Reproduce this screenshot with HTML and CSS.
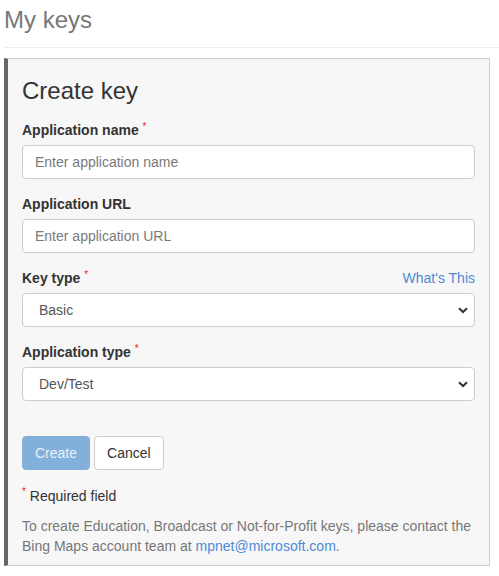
FILE: index.html
```html
<!DOCTYPE html>
<html>
<head>
<meta charset="utf-8">
<link rel="stylesheet" href="styles.css">
</head>
<body>
<div class="page">
  <h1 class="page-title">My keys</h1>
  <hr class="divider">
  <div class="panel">
    <h3 class="panel-title">Create key</h3>
    <div class="form-group">
      <label class="label">Application name <sup class="req">*</sup></label>
      <input class="control" type="text" placeholder="Enter application name">
    </div>
    <div class="form-group">
      <label class="label">Application URL</label>
      <input class="control" type="text" placeholder="Enter application URL">
    </div>
    <div class="form-group">
      <div class="label-row">
        <label class="label">Key type <sup class="req">*</sup></label>
        <a class="link" href="#">What's This</a>
      </div>
      <div class="select">Basic
        <svg class="chev" width="10" height="7" viewBox="0 0 10 7"><path d="M1 1.2 L5 5 L9 1.2" fill="none" stroke="#333" stroke-width="2"/></svg>
      </div>
    </div>
    <div class="form-group">
      <label class="label">Application type <sup class="req">*</sup></label>
      <div class="select">Dev/Test
        <svg class="chev" width="10" height="7" viewBox="0 0 10 7"><path d="M1 1.2 L5 5 L9 1.2" fill="none" stroke="#333" stroke-width="2"/></svg>
      </div>
    </div>
    <div class="actions">
      <button class="btn btn-primary">Create</button>
      <button class="btn btn-default">Cancel</button>
    </div>
    <p class="required"><sup class="req">*</sup> Required field</p>
    <p class="note">To create Education, Broadcast or Not-for-Profit keys, please contact the Bing Maps account team at <a class="link" href="#">mpnet@microsoft.com</a>.</p>
  </div>
</div>
</body>
</html>
```
FILE: styles.css
```css
* { box-sizing: border-box; }
html, body { margin: 0; padding: 0; background: #fff; }
body {
  font-family: "Liberation Sans", Arial, sans-serif;
  font-size: 14px;
  line-height: 20px;
  color: #333;
}
.page { padding: 7px 0 0 4px; }
.page-title {
  margin: 0;
  font-size: 24px;
  line-height: 26px;
  font-weight: normal;
  color: #777;
}
.divider {
  margin: 14px 0 10px 0;
  border: 0;
  border-top: 1px solid #eee;
}
.panel {
  width: 486px;
  background: #f7f7f7;
  border: 1px solid #ccc;
  border-left: 4px solid #666;
  padding: 19px 14px 9px 14px;
}
.panel-title {
  margin: 0 0 16px 0;
  font-size: 24px;
  line-height: 26px;
  font-weight: normal;
  color: #333;
}
.form-group { margin-bottom: 15px; }
.label-row {
  display: flex;
  justify-content: space-between;
  align-items: baseline;
  margin-bottom: 5px;
}
.label-row .label { margin-bottom: 0; }
.label {
  display: block;
  font-weight: bold;
  margin-bottom: 5px;
  line-height: 20px;
}
.req {
  color: #e22;
  font-weight: normal;
  font-size: 10px;
  line-height: 0;
  vertical-align: 5px;
}
.link { color: #4d8ad6; text-decoration: none; }
.control {
  display: block;
  width: 100%;
  height: 34px;
  padding: 6px 12px;
  font-family: inherit;
  font-size: 14px;
  color: #555;
  background: #fff;
  border: 1px solid #ccc;
  border-radius: 4px;
  outline: none;
}
.control::placeholder { color: #7a7a7a; }
.select {
  display: flex;
  align-items: center;
  justify-content: space-between;
  height: 34px;
  padding: 0 6px 0 16px;
  background: #fff;
  border: 1px solid #ccc;
  border-radius: 4px;
  color: #555;
}
.chev { display: block; }
.actions {
  display: flex;
  gap: 4px;
  margin-top: 35px;
}
.btn {
  height: 34px;
  padding: 6px 12px;
  font-family: inherit;
  font-size: 14px;
  line-height: 20px;
  border-radius: 4px;
  border: 1px solid transparent;
}
.btn-primary {
  background: #82b0da;
  border-color: #82b0da;
  color: #e8f0f8;
}
.btn-default {
  background: #fff;
  border-color: #ccc;
  color: #333;
}
.required { margin: 16px 0 10px 0; color: #333; }
.required .req { vertical-align: 6px; }
.note { margin: 0; color: #777; }
```
